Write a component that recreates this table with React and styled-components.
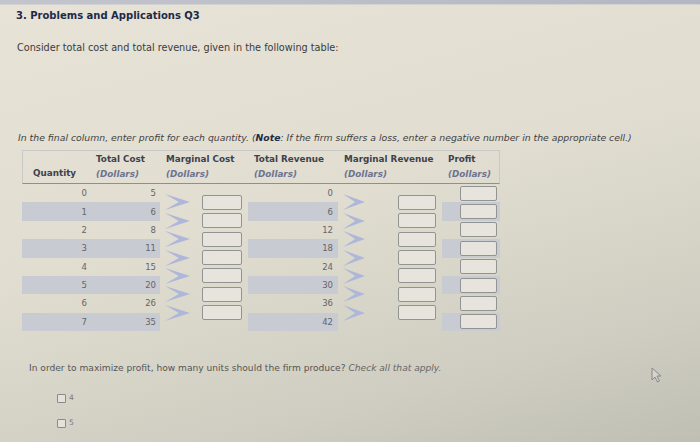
import React from 'react';
import styled, { createGlobalStyle } from 'styled-components';

const GlobalStyle = createGlobalStyle`
  html, body {
    margin: 0;
    padding: 0;
  }
  body {
    width: 700px;
    height: 442px;
    overflow: hidden;
    font-family: "DejaVu Sans", Verdana, sans-serif;
    background: linear-gradient(165deg, #e7e3d7 0%, #e1ddd1 45%, #cfcdc1 80%, #bfbfb3 100%);
  }
`;

const Page = styled.div`
  position: relative;
  height: 442px;
  display: flex;
  flex-direction: column;
`;

const TopBand = styled.div`
  height: 4px;
  background: linear-gradient(to right, #c3c5cd, #b4b7c3);
  border-bottom: 1px solid #d2d2d2;
`;

const Content = styled.div`
  padding: 4px 0 0 16px;
`;

const Title = styled.h1`
  margin: 0;
  font-size: 10px;
  font-weight: bold;
  color: #1d2a47;
  line-height: 14px;
`;

const Intro = styled.p`
  margin: 18px 0 0 1px;
  font-size: 9.7px;
  color: #3b3b3b;
  line-height: 14px;
`;

const Instruction = styled.p`
  margin: 77px 0 0 2px;
  font-size: 9.3px;
  font-style: italic;
  color: #3f3f3f;
  line-height: 12px;
  white-space: nowrap;

  b {
    color: #1f2b45;
  }
`;

const Table = styled.div`
  margin: 6px 0 0 6px;
  width: 478px;
`;

const COLS = '68px 70px 88px 90px 104px 58px';

const HeaderRow = styled.div`
  display: grid;
  grid-template-columns: ${COLS};
  border: 1px solid #c9cac8;
  border-bottom: 1px solid #8e9090;
  height: 32px;
  align-items: center;
`;

const HeadCell = styled.div`
  padding-left: ${(p) => p.$pad || 5}px;
  font-size: 8.8px;
  font-weight: bold;
  color: #3d424c;
  line-height: 15px;
  align-self: ${(p) => (p.$bottom ? 'end' : 'center')};
  padding-bottom: ${(p) => (p.$bottom ? 2 : 0)}px;
`;

const Unit = styled.span`
  display: block;
  font-style: italic;
  color: #6c7390;
`;

const Body = styled.div`
  display: grid;
  grid-template-columns: ${COLS};
  grid-template-rows: repeat(16, 9.2px);
`;

const NumCell = styled.div`
  grid-column: ${(p) => p.$col};
  grid-row: ${(p) => p.$row} / span 2;
  background: ${(p) => (p.$shade ? '#c9cbd2' : 'transparent')};
  display: flex;
  align-items: center;
  justify-content: flex-end;
  padding-right: ${(p) => p.$pr}px;
  font-size: 8.5px;
  color: #636569;
`;

const ShadeCell = styled.div`
  grid-column: ${(p) => p.$col};
  grid-row: ${(p) => p.$row} / span 2;
  background: ${(p) => (p.$shade ? '#c9cbd2' : 'transparent')};
  display: flex;
  align-items: center;
  padding-left: ${(p) => p.$pl}px;
`;

const MarginCell = styled.div`
  grid-column: ${(p) => p.$col};
  grid-row: ${(p) => p.$row} / span 2;
  display: flex;
  align-items: center;
  padding-left: 5px;
  gap: ${(p) => p.$gap}px;
  z-index: 1;
`;

const Chevron = styled.svg`
  flex: none;
  width: ${(p) => p.$w}px;
  height: 18px;
`;

const InputBox = styled.div`
  flex: none;
  width: ${(p) => p.$w}px;
  height: 15px;
  box-sizing: border-box;
  border: 1px solid #929494;
  border-radius: 2px;
  background: #e6e4dc;
`;

const Question = styled.p`
  margin: 31px 0 0 13px;
  font-size: 9.1px;
  color: #555;
  line-height: 12px;

  i {
    color: #666;
  }
`;

const Options = styled.div`
  margin: 18px 0 0 41px;
  display: flex;
  flex-direction: column;
  gap: 13px;
`;

const Option = styled.label`
  display: flex;
  align-items: center;
  gap: 3px;
  font-size: 7.5px;
  color: #7a7a7a;
  line-height: 12px;
`;

const Check = styled.span`
  width: 7px;
  height: 7px;
  border: 1px solid #8a8a8a;
  border-radius: 1px;
  background: #e4e2da;
`;

const Cursor = styled.svg`
  position: absolute;
  left: 651px;
  top: 367px;
  width: 11px;
  height: 16px;
  opacity: 0.7;
`;

const rows = [
  { q: 0, tc: 5, tr: 0 },
  { q: 1, tc: 6, tr: 6 },
  { q: 2, tc: 8, tr: 12 },
  { q: 3, tc: 11, tr: 18 },
  { q: 4, tc: 15, tr: 24 },
  { q: 5, tc: 20, tr: 30 },
  { q: 6, tc: 26, tr: 36 },
  { q: 7, tc: 35, tr: 42 },
];

function Arrow({ w }) {
  return (
    <Chevron $w={w} viewBox={`0 0 ${w} 18`}>
      <polygon points={`0,1 ${w},9 0,17 ${w * 0.55},9`} fill="#aeb7da" />
    </Chevron>
  );
}

function App() {
  return (
    <Page>
      <GlobalStyle />
      <TopBand />
      <Content>
        <Title>3. Problems and Applications Q3</Title>
        <Intro>Consider total cost and total revenue, given in the following table:</Intro>
        <Instruction>
          In the final column, enter profit for each quantity. (<b>Note</b>: If the firm suffers a loss,
          enter a negative number in the appropriate cell.)
        </Instruction>

        <Table>
          <HeaderRow>
            <HeadCell $pad={10} $bottom>Quantity</HeadCell>
            <HeadCell>Total Cost<Unit>(Dollars)</Unit></HeadCell>
            <HeadCell>Marginal Cost<Unit>(Dollars)</Unit></HeadCell>
            <HeadCell>Total Revenue<Unit>(Dollars)</Unit></HeadCell>
            <HeadCell>Marginal Revenue<Unit>(Dollars)</Unit></HeadCell>
            <HeadCell>Profit<Unit>(Dollars)</Unit></HeadCell>
          </HeaderRow>
          <Body>
            {rows.map((r, i) => {
              const shade = i % 2 === 1;
              const row = i * 2 + 1;
              return (
                <React.Fragment key={r.q}>
                  <NumCell $col={1} $row={row} $pr={3} $shade={shade}>{r.q}</NumCell>
                  <NumCell $col={2} $row={row} $pr={4} $shade={shade}>{r.tc}</NumCell>
                  <NumCell $col={4} $row={row} $pr={5} $shade={shade}>{r.tr}</NumCell>
                  <ShadeCell $col={6} $row={row} $pl={18} $shade={shade}>
                    <InputBox $w={37} />
                  </ShadeCell>
                  {i < rows.length - 1 && (
                    <>
                      <MarginCell $col={3} $row={row + 1} $gap={12}>
                        <Arrow w={25} />
                        <InputBox $w={40} />
                      </MarginCell>
                      <MarginCell $col={5} $row={row + 1} $gap={33}>
                        <Arrow w={22} />
                        <InputBox $w={38} />
                      </MarginCell>
                    </>
                  )}
                </React.Fragment>
              );
            })}
          </Body>
        </Table>

        <Question>
          In order to maximize profit, how many units should the firm produce? <i>Check all that apply.</i>
        </Question>
        <Options>
          <Option><Check />4</Option>
          <Option><Check />5</Option>
        </Options>
      </Content>
      <Cursor viewBox="0 0 11 16">
        <path d="M1 1 L1 13 L4 10 L6.5 15 L8.5 14 L6 9 L10 9 Z" fill="#d8d8d8" stroke="#6f6f70" strokeWidth="1" />
      </Cursor>
    </Page>
  );
}

export default App;
